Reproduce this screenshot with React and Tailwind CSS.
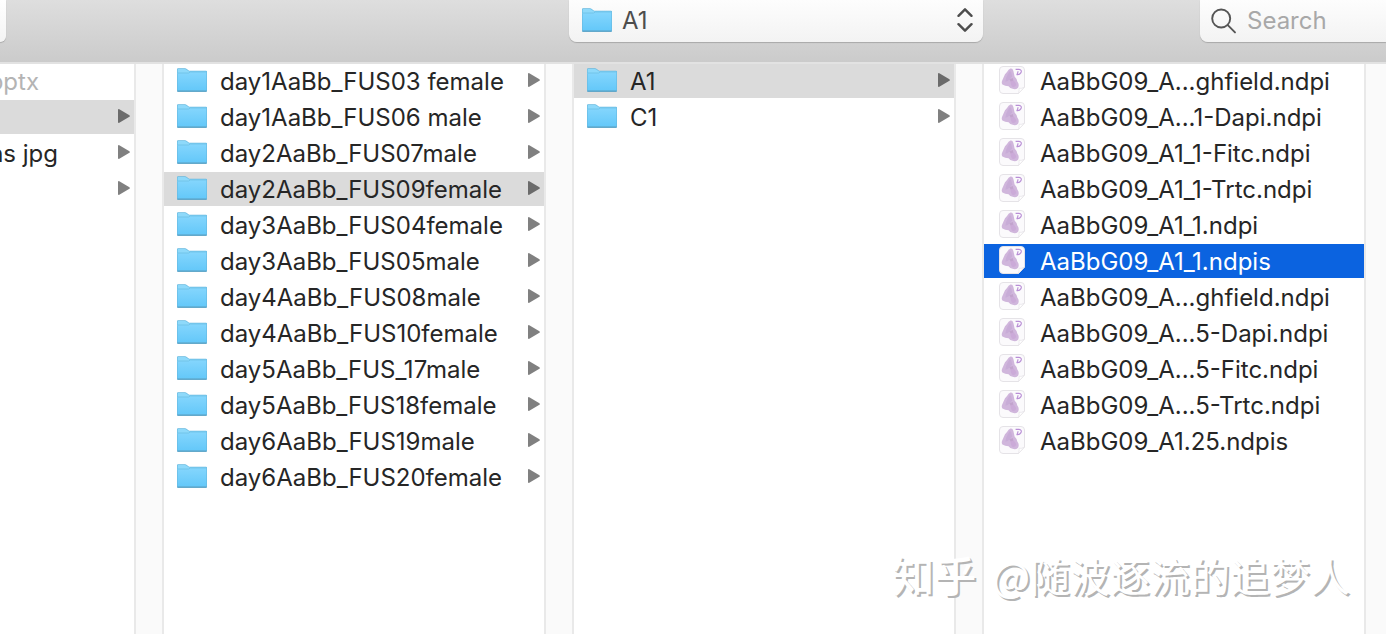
import React from 'react';

function Folder() {
  return (
    <svg className="h-6 w-[30px] shrink-0" viewBox="0 0 30 24" aria-hidden="true">
      <defs>
        <linearGradient id="folder" x1="0" y1="0" x2="0" y2="1">
          <stop offset="0" stopColor="#85d6fd" />
          <stop offset="1" stopColor="#64c8f9" />
        </linearGradient>
      </defs>
      <path d="M0 1.2Q0 .2 1 .2H8Q9 .2 9.8 .9L11.4 2.2Q12 2.7 13 2.7H29Q30 2.7 30 3.7V22.6Q30 23.8 29 23.8H1Q0 23.8 0 22.6Z" fill="#66b9e0" />
      <path d="M.6 1.3Q.6 .9 1.1 .9H8Q8.8 .9 9.5 1.5L11 2.8Q11.7 3.4 12.8 3.4H29V6H.6Z" fill="#8ed9fa" />
      <path d="M.6 5.2H11.5L14 3.8H29.4V22.5H.6Z" fill="url(#folder)" />
      <path d="M.6 5H11.5L13.5 3.9H29.4" fill="none" stroke="#6bbfe5" strokeWidth=".8" />
      <path d="M.4 23.2H29.6" stroke="#5aa0c4" strokeWidth="1.2" />
    </svg>
  );
}

function SlideFile() {
  return (
    <svg className="h-7 w-[26px] shrink-0" viewBox="0 0 26 28" aria-hidden="true">
      <path d="M4 .5H22Q25.5 .5 25.5 4V21L19.5 27.5H4Q.5 27.5 .5 24V4Q.5 .5 4 .5Z" fill="#fbfafc" stroke="#e5e3e7" />
      <path d="M25.5 21L19.5 27.5Q20.5 24 20 22.3Q23 22.8 25.5 21Z" fill="#fff" stroke="#e5e3e7" strokeWidth=".7" />
      <path d="M11.5 2.6Q13.6 2.2 14.4 5L15.6 10.5Q18 12.8 18.3 15.5Q20.6 18 19.2 21.4Q17 24 13.6 22.8Q11 22.2 9.6 20.2Q6 20 3.4 18.4Q2.2 16.6 3.2 14.6L6 8.2Q8.6 5.6 9.6 3.8Z" fill="#d0b6dc" />
      <path d="M11 4.8Q13.2 7 13 10.2Q11 14.6 6.4 15.8Q6.6 11.6 8.8 8.2Z" fill="#c8acd7" />
      <path d="M12 13.5Q16.5 14.5 17.3 19Q16 21.6 13.2 20.8Q10.6 17.5 12 13.5Z" fill="#cbaad8" />
      <path d="M10.5 13.2L13.8 12L14.4 14.5L11.6 15.6Z" fill="#c2a3cd" />
      <path d="M16.6 3.4H20Q23.2 3.9 22 6.6Q20.6 9 18 8.6L19.2 5.2" fill="none" stroke="#b98ed6" strokeWidth="1.1" />
    </svg>
  );
}

function Arrow({ active }) {
  return (
    <svg className={active ? 'h-4 w-3 shrink-0 text-[#6b6b6b]' : 'h-4 w-3 shrink-0 text-[#808080]'} viewBox="0 0 12 16" aria-hidden="true">
      <path d="M0 2Q0 .8 1.3 1.2L11.4 7.2Q12.3 8 11.4 8.8L1.3 14.8Q0 15.2 0 14Z" fill="currentColor" />
    </svg>
  );
}

const days = [
  'day1AaBb_FUS03 female',
  'day1AaBb_FUS06 male',
  'day2AaBb_FUS07male',
  'day2AaBb_FUS09female',
  'day3AaBb_FUS04female',
  'day3AaBb_FUS05male',
  'day4AaBb_FUS08male',
  'day4AaBb_FUS10female',
  'day5AaBb_FUS_17male',
  'day5AaBb_FUS18female',
  'day6AaBb_FUS19male',
  'day6AaBb_FUS20female',
];

const slides = [
  'AaBbG09_A...ghfield.ndpi',
  'AaBbG09_A...1-Dapi.ndpi',
  'AaBbG09_A1_1-Fitc.ndpi',
  'AaBbG09_A1_1-Trtc.ndpi',
  'AaBbG09_A1_1.ndpi',
  'AaBbG09_A1_1.ndpis',
  'AaBbG09_A...ghfield.ndpi',
  'AaBbG09_A...5-Dapi.ndpi',
  'AaBbG09_A...5-Fitc.ndpi',
  'AaBbG09_A...5-Trtc.ndpi',
  'AaBbG09_A1.25.ndpis',
];

function FolderColumn({ names, selected }) {
  return (
    <ul className="flex w-[380px] shrink-0 flex-col gap-0.5 bg-white">
      {names.map((name, i) => (
        <li key={name}>
          <button
            type="button"
            className={
              i === selected
                ? 'flex h-[34px] w-full items-center bg-[#dbdbdb] pr-1 pb-0.5 pl-[13px] text-left'
                : 'flex h-[34px] w-full items-center pr-1 pb-0.5 pl-[13px] text-left'
            }
          >
            <Folder />
            <span className="ml-[13px] flex-1 pt-1 whitespace-pre">{name}</span>
            <Arrow active={i === selected} />
          </button>
        </li>
      ))}
    </ul>
  );
}

function Gutter() {
  return <div className="w-[30px] shrink-0 border-x-2 border-[#e9e9e9] bg-[#fafafa]" />;
}

export default function App() {
  return (
    <div className="relative flex min-h-screen flex-col overflow-hidden bg-white font-['Inter',sans-serif] text-2xl text-[#262626]">
      <header className="flex h-16 shrink-0 items-start border-b-2 border-[#e2e2e2] bg-linear-to-b from-[#dedede] to-[#cbcbcb]">
        <button
          type="button"
          aria-label="View options"
          className="h-[42px] w-1.5 rounded-br-lg bg-linear-to-b from-white to-[#f4f4f4] shadow-[0_1px_1px_#a8a8a8]"
        />
        <div className="relative ml-[563px] h-[42px] w-[414px] shrink-0 rounded-b-lg bg-linear-to-b from-[#fdfdfd] to-[#f3f3f3] shadow-[0_1px_1px_#a8a8a8]">
          <select
            aria-label="Current folder"
            className="h-[42px] w-full appearance-none bg-transparent pl-[53px] text-[#4d4d4d]"
            defaultValue="A1"
          >
            <option>A1</option>
          </select>
          <span className="pointer-events-none absolute inset-0 flex items-center justify-between pr-2.5 pb-0.5 pl-[13px]">
            <Folder />
            <svg className="h-[26px] w-4" viewBox="0 0 16 26" fill="none" stroke="#4d4d4d" strokeWidth="2.4" strokeLinecap="round" strokeLinejoin="round" aria-hidden="true">
              <path d="M1.5 8.8L8 2.3L14.5 8.8M1.5 17.2L8 23.7L14.5 17.2" />
            </svg>
          </span>
        </div>
        <label className="ml-auto flex h-[42px] w-[186px] shrink-0 items-center rounded-bl-lg bg-linear-to-b from-[#fdfdfd] to-[#f3f3f3] pl-[11px] shadow-[0_1px_1px_#a8a8a8]">
          <svg className="h-[26px] w-[26px] shrink-0" viewBox="0 0 26 26" fill="none" stroke="#555" strokeWidth="1.9" strokeLinecap="round" aria-hidden="true">
            <circle cx="10.2" cy="10.5" r="9" />
            <path d="M16.8 17.2L24 24.4" />
          </svg>
          <input
            type="search"
            aria-label="Search"
            placeholder="Search"
            className="ml-2.5 w-full min-w-0 bg-transparent outline-none placeholder:text-[#a8a8a8]"
          />
        </label>
      </header>

      <main className="flex flex-1">
        <ul className="flex w-[134px] shrink-0 flex-col gap-0.5 bg-white">
          <li className="flex h-[34px] items-center pb-0.5">
            <span className="flex w-[39px] justify-end pt-1 text-[#b4b4b4]">pptx</span>
          </li>
          <li>
            <button type="button" aria-label="Open folder" className="flex h-[34px] w-full items-center justify-end bg-[#dbdbdb] pr-1 pb-0.5">
              <Arrow active />
            </button>
          </li>
          <li>
            <button type="button" className="flex h-[34px] w-full items-center justify-between pr-1 pb-0.5">
              <span className="flex w-[58px] justify-end pt-1 whitespace-pre">ns jpg</span>
              <Arrow />
            </button>
          </li>
          <li>
            <button type="button" aria-label="Folder" className="flex h-[34px] w-full items-center justify-end pr-1 pb-0.5">
              <Arrow />
            </button>
          </li>
        </ul>
        <Gutter />
        <FolderColumn names={days} selected={3} />
        <Gutter />
        <FolderColumn names={['A1', 'C1']} selected={0} />
        <Gutter />
        <ul className="flex w-[380px] shrink-0 flex-col gap-0.5 bg-white">
          {slides.map((name, i) => (
            <li key={i}>
              <button
                type="button"
                className={
                  i === 5
                    ? 'flex h-[34px] w-full items-center bg-[#0b63e0] pb-0.5 pl-[15px] text-left text-white'
                    : 'flex h-[34px] w-full items-center pb-0.5 pl-[15px] text-left'
                }
              >
                <SlideFile />
                <span className="ml-[15px] pt-1 whitespace-pre">{name}</span>
              </button>
            </li>
          ))}
        </ul>
        <div className="flex-1 border-l-2 border-[#e9e9e9] bg-[#fafafa]" />
      </main>

      <p className="pointer-events-none absolute right-9 bottom-8 flex items-baseline gap-4 font-['Noto_Sans_CJK_SC',sans-serif] text-[40px] whitespace-pre text-white [text-shadow:2px_2px_0_#b4b4b4]">
        <span className="text-[42px] font-medium">知乎</span>
        <span>@随波逐流的追梦人</span>
      </p>
    </div>
  );
}
